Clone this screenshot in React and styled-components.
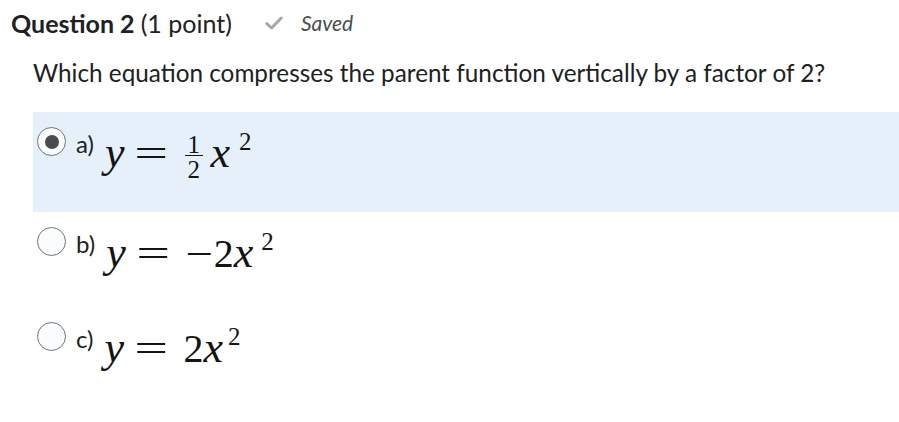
import React from "react";
import styled, { createGlobalStyle } from "styled-components";

const Global = createGlobalStyle`
  html, body { margin: 0; padding: 0; background: #fff; }
  body { font-family: Lato, "Noto Sans", sans-serif; color: #202122; }
`;

const Page = styled.div`
  width: 899px;
  height: 422px;
  overflow: hidden;
  padding: 8px 0 0 11px;
  box-sizing: border-box;
`;

const Header = styled.div`
  display: flex;
  align-items: center;
  height: 30px;
`;

const Title = styled.h2`
  margin: 0;
  font-size: 25px;
  line-height: 30px;
  font-weight: 700;
  color: #202122;
  span { font-weight: 400; }
`;

const SavedWrap = styled.div`
  display: flex;
  align-items: center;
  margin-left: 33px;
  gap: 18px;
  color: #494c4e;
  font-size: 21px;
  font-style: italic;
  line-height: 30px;
`;

const Body = styled.div`
  padding-left: 22px;
`;

const Prompt = styled.p`
  margin: 20px 0 0;
  font-size: 24.3px;
  line-height: 29px;
  color: #202122;
`;

const Options = styled.div`
  margin-top: 25px;
  display: flex;
  flex-direction: column;
`;

const Option = styled.label`
  display: flex;
  align-items: flex-start;
  height: ${(p) => p.$h}px;
  padding: 15px 0 0 4px;
  box-sizing: border-box;
  background: ${(p) => (p.$selected ? "#e6f0fb" : "transparent")};
`;

const Radio = styled.span`
  width: 29px;
  height: 29px;
  border-radius: 50%;
  border: 1px solid #6e7376;
  background: #fbfcfe;
  box-sizing: border-box;
  display: flex;
  align-items: center;
  justify-content: center;
  flex: none;
  &::after {
    content: "";
    display: ${(p) => (p.$checked ? "block" : "none")};
    width: 14px;
    height: 14px;
    border-radius: 50%;
    background: #494c4e;
  }
`;

const Letter = styled.span`
  margin: 5px 0 0 10px;
  font-size: 24px;
  line-height: 24px;
  color: #202122;
`;

const Formula = styled.span`
  margin: 6.5px 0 0 11px;
  font-family: "Liberation Serif", "Times New Roman", serif;
  font-size: 40px;
  line-height: 40px;
  color: #141414;
  white-space: nowrap;
`;

const V = styled.i`
  font-style: italic;
  font-size: 44px;
  line-height: 0;
  margin-right: ${(p) => p.$mr ?? 0}px;
`;

const Op = styled.span`
  display: inline-block;
  transform: scaleX(${(p) => p.$sx ?? 1.5});
  margin: 0 ${(p) => p.$mr ?? 0}px 0 ${(p) => p.$ml ?? 0}px;
`;

const Num = styled.span`
  margin-right: ${(p) => p.$mr ?? 0}px;
`;

const Sup = styled.span`
  font-size: 25px;
  line-height: 0;
  vertical-align: 17px;
  margin-left: ${(p) => p.$ml ?? 7}px;
`;

const Frac = styled.span`
  display: inline-flex;
  flex-direction: column;
  align-items: stretch;
  text-align: center;
  font-size: 25px;
  line-height: 18px;
  vertical-align: 14px;
  margin: 0 8px 0 0;
`;

const Numer = styled.span`
  padding: 0 2.5px 1px;
  border-bottom: 1.5px solid #141414;
`;

const Denom = styled.span`
  padding: 5.5px 2.5px 0;
`;

const Check = () => (
  <svg width="18" height="14" viewBox="0 0 18 14">
    <path d="M1.8 7.6 L6.6 12 L16.2 2" fill="none" stroke="#a4a8ab" strokeWidth="3" strokeLinecap="round" strokeLinejoin="round" />
  </svg>
);

export default function App() {
  return (
    <Page>
      <Global />
      <Header>
        <Title>
          Question 2 <span>(1 point)</span>
        </Title>
        <SavedWrap>
          <Check />
          Saved
        </SavedWrap>
      </Header>
      <Body>
        <Prompt>Which equation compresses the parent function vertically by a factor of 2?</Prompt>
        <Options>
          <Option $selected $h={100}>
            <Radio $checked />
            <Letter>a)</Letter>
            <Formula>
              <V>y</V>
              <Op $ml={16} $mr={22}>=</Op>
              <Frac>
                <Numer>1</Numer>
                <Denom>2</Denom>
              </Frac>
              <V>x</V>
              <Sup $ml={9}>2</Sup>
            </Formula>
          </Option>
          <Option $h={95}>
            <Radio />
            <Letter>b)</Letter>
            <Formula>
              <V>y</V>
              <Op $ml={16} $mr={24}>=</Op>
              <Op $sx={1.22} $mr={3}>−</Op>
              <Num>2</Num>
              <V>x</V>
              <Sup $ml={8}>2</Sup>
            </Formula>
          </Option>
          <Option $h={115}>
            <Radio />
            <Letter>c)</Letter>
            <Formula>
              <V>y</V>
              <Op $ml={16} $mr={21}>=</Op>
              <Num>2</Num>
              <V>x</V>
              <Sup $ml={5}>2</Sup>
            </Formula>
          </Option>
        </Options>
      </Body>
    </Page>
  );
}
